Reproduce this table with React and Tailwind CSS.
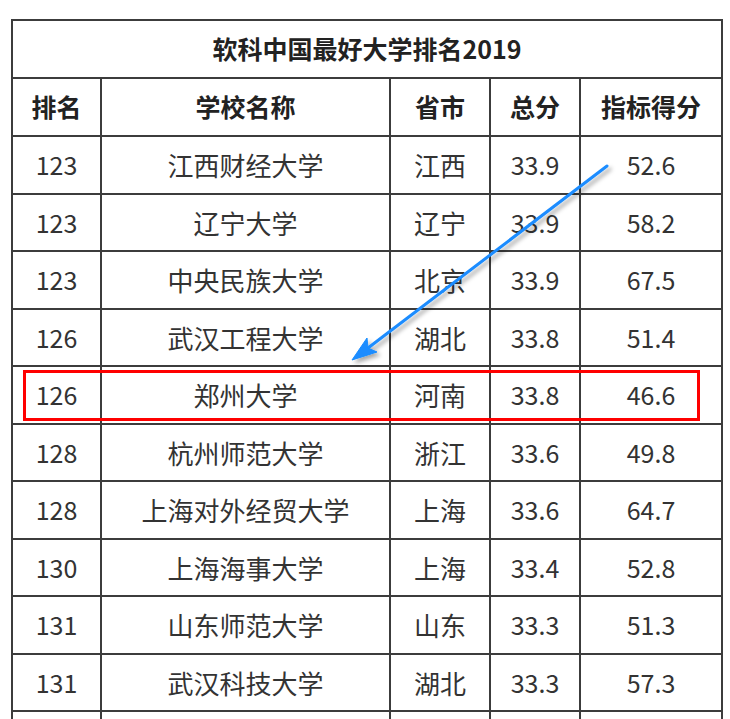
import React from 'react';

// 软科 2019 排名片段：表格 + 红框高亮 + 蓝色箭头标注
const rows = [
    ['123', '江西财经大学', '江西', '33.9', '52.6'],
    ['123', '辽宁大学', '辽宁', '33.9', '58.2'],
    ['123', '中央民族大学', '北京', '33.9', '67.5'],
    ['126', '武汉工程大学', '湖北', '33.8', '51.4'],
    ['126', '郑州大学', '河南', '33.8', '46.6'],
    ['128', '杭州师范大学', '浙江', '33.6', '49.8'],
    ['128', '上海对外经贸大学', '上海', '33.6', '64.7'],
    ['130', '上海海事大学', '上海', '33.4', '52.8'],
    ['131', '山东师范大学', '山东', '33.3', '51.3'],
    ['131', '武汉科技大学', '湖北', '33.3', '57.3'],
    ['', '', '', '', ''],
];

const cell = 'border-2 border-[#3c3c3c] text-center align-middle p-0';

export default function App() {
    return (
        <div className="relative h-[719px] w-[730px] overflow-hidden bg-white pl-[11px] pt-[19px] text-[#333]"
             style={{ fontFamily: '"Noto Sans CJK SC", "Noto Sans", sans-serif' }}>
            <table className="w-[712px] table-fixed border-collapse">
                <colgroup>
                    <col className="w-[89px]" />
                    <col className="w-[289px]" />
                    <col className="w-[100px]" />
                    <col className="w-[90px]" />
                    <col className="w-[142px]" />
                </colgroup>
                <thead>
                    <tr className="h-[58px]">
                        <th colSpan={5} className={`${cell} text-[25px] font-bold text-[#222]`}>软科中国最好大学排名2019</th>
                    </tr>
                    <tr className="h-[58px] text-[25px] font-bold text-[#222]">
                        <th className={cell}>排名</th>
                        <th className={cell}>学校名称</th>
                        <th className={cell}>省市</th>
                        <th className={cell}>总分</th>
                        <th className={cell}>指标得分</th>
                    </tr>
                </thead>
                <tbody>
                    {rows.map((r, i) => (
                        <tr key={i} className="h-[57.5px] text-[25px]">
                            {r.map((v, j) => (
                                <td key={j} className={j === 1 || j === 2 ? `${cell} text-[26px]` : cell}>{v}</td>
                            ))}
                        </tr>
                    ))}
                </tbody>
            </table>

            {/* 红框高亮 郑州大学 */}
            <div className="absolute left-[23px] top-[370px] h-[51px] w-[677px] border-[3px] border-[#ff0000]" />

            {/* 蓝色箭头 */}
            <svg className="absolute left-0 top-0" width="730" height="719" viewBox="0 0 730 719">
                <defs>
                    <filter id="sh" x="-20%" y="-20%" width="140%" height="140%">
                        <feDropShadow dx="3" dy="3" stdDeviation="2" floodColor="#000" floodOpacity="0.35" />
                    </filter>
                </defs>
                <g filter="url(#sh)" fill="#1a8cff" stroke="#1a8cff">
                    <line x1="607" y1="166" x2="368" y2="348" strokeWidth="3" strokeLinecap="round" />
                    <polygon points="352,360 377,352 368,348 367,338" strokeWidth="1" strokeLinejoin="round" />
                </g>
            </svg>
        </div>
    );
}
